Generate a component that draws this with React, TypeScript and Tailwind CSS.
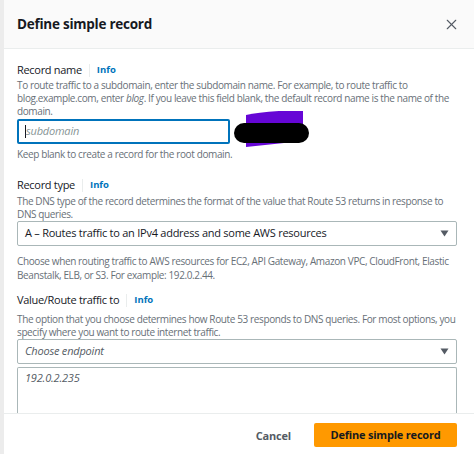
import { X } from "lucide-react";

const Caret = () => (
  <svg width="9" height="7" viewBox="0 0 9 7" className="shrink-0">
    <path d="M0.5 0.5 H8.5 L4.5 6.5 Z" fill="#545b64" />
  </svg>
);

const Label = ({ children }: { children: React.ReactNode }) => (
  <div className="flex h-[16px] items-center text-[11px] tracking-[-0.3px] text-[#16191f]">
    <span>{children}</span>
    <span className="mx-[7px] h-[13px] w-px bg-[#eaeded]" />
    <span className="text-[9.5px] font-bold tracking-normal text-[#0073bb]">Info</span>
  </div>
);

const Help = ({ children }: { children: React.ReactNode }) => (
  <p className="text-[10px] leading-[13px] tracking-[-0.38px] text-[#687078]">{children}</p>
);

// redaction scribble drawn over the page
const Scribble = () => (
  <svg width="80" height="40" viewBox="0 0 80 40" className="absolute left-[216px] top-[-8px]">
    <path d="M13 4 Q30 0 70 -1 L70 30 L13 36 Z" fill="#6606d6" />
    <rect x="1" y="12" width="75" height="20" rx="10" fill="#000" />
  </svg>
);

export default function App() {
  return (
    <div
      className="flex h-[454px] w-[474px] flex-col overflow-hidden border-l-4 border-[#ececec] bg-white"
      style={{ fontFamily: '"Open Sans", "Noto Sans", sans-serif' }}
    >
      <div className="flex h-[49px] shrink-0 items-center justify-between border-b border-[#eaeded] bg-[#fafafa] pl-[13px] pr-[14px]">
        <h2 className="text-[13.5px] font-bold tracking-[-0.25px] text-[#16191f]">Define simple record</h2>
        <X size={17} strokeWidth={1.6} className="text-[#545b64]" />
      </div>

      <div className="flex min-h-0 flex-1 flex-col pl-[13px] pr-[17px] pt-[13px]">
        <Label>Record name</Label>
        <div className="mt-[1px]">
          <Help>
            To route traffic to a subdomain, enter the subdomain name. For example, to route traffic to
            blog.example.com, enter <i>blog</i>. If you leave this field blank, the default record name is the name of
            the domain.
          </Help>
        </div>
        <div className="relative mt-[1px] h-[25px]">
          <div className="flex h-[25px] w-[213px] items-center rounded-[2px] border-2 border-[#0073bb] px-[6px]">
            <span className="h-[13px] w-px bg-[#16191f]" />
            <span className="text-[11px] italic tracking-[-0.2px] text-[#879596]">subdomain</span>
          </div>
          <Scribble />
        </div>
        <div className="mt-[4px]">
          <Help>Keep blank to create a record for the root domain.</Help>
        </div>

        <div className="mt-[16px]">
          <Label>Record type</Label>
        </div>
        <div className="mt-[2px]">
          <Help>
            The DNS type of the record determines the format of the value that Route 53 returns in response to DNS
            queries.
          </Help>
        </div>
        <div className="flex h-[25px] shrink-0 items-center justify-between rounded-[2px] border border-[#aab7b8] px-[7px]">
          <span className="text-[11px] tracking-[-0.25px] text-[#16191f]">
            A – Routes traffic to an IPv4 address and some AWS resources
          </span>
          <Caret />
        </div>
        <div className="mt-[8px]">
          <p className="text-[10px] leading-[14px] tracking-[-0.38px] text-[#687078]">
            Choose when routing traffic to AWS resources for EC2, API Gateway, Amazon VPC, CloudFront, Elastic
            Beanstalk, ELB, or S3. For example: 192.0.2.44.
          </p>
        </div>

        <div className="mt-[10px]">
          <Label>Value/Route traffic to</Label>
        </div>
        <div className="mt-[5px]">
          <Help>
            The option that you choose determines how Route 53 responds to DNS queries. For most options, you specify
            where you want to route internet traffic.
          </Help>
        </div>
        <div className="flex h-[25px] shrink-0 items-center justify-between rounded-[2px] border border-[#aab7b8] px-[7px]">
          <span className="text-[11px] italic tracking-[-0.2px] text-[#545b64]">Choose endpoint</span>
          <Caret />
        </div>
        <div className="mt-[3px] min-h-0 flex-1 rounded-t-[2px] border-x border-t border-[#aab7b8] px-[7px] pt-[2px] text-[11px] italic leading-[15px] tracking-[-0.2px] text-[#545b64]">
          192.0.2.235
        </div>
      </div>

      <div className="flex h-[41px] shrink-0 items-start justify-end gap-[23px] border-t border-[#eaeded] bg-white pr-[17px] pt-[9px]">
        <button className="mt-[5px] text-[11px] font-bold tracking-[-0.2px] text-[#545b64]">Cancel</button>
        <button className="h-[24px] w-[143px] rounded-[2px] bg-[#ff9900] text-[11px] font-bold tracking-[-0.2px] text-[#16191f]">
          Define simple record
        </button>
      </div>
    </div>
  );
}
